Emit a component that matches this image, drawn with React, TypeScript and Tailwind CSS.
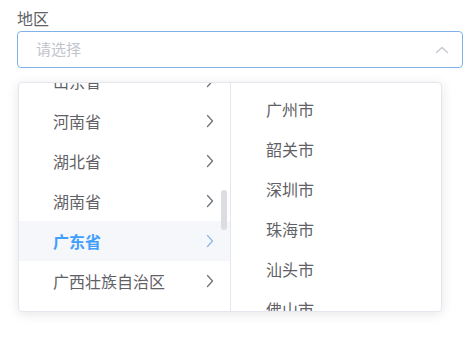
import React from "react";

const provinces = ["山东省", "河南省", "湖北省", "湖南省", "广东省", "广西壮族自治区", "海南省"];
const cities = ["广州市", "韶关市", "深圳市", "珠海市", "汕头市", "佛山市", "江门市"];

function ChevronRight({ color }: { color: string }) {
  return (
    <svg width="8" height="14" viewBox="0 0 8 14" fill="none">
      <polyline points="1.5,1.5 6.5,7 1.5,12.5" stroke={color} strokeWidth="1.3" strokeLinecap="round" strokeLinejoin="round" />
    </svg>
  );
}

export default function App() {
  return (
    <div
      className="w-[474px] h-[338px] bg-white pt-[8px] pl-[17px]"
      style={{ fontFamily: '"Noto Sans CJK SC", "Noto Sans", sans-serif' }}
    >
      <div className="text-[16px] leading-[20px] text-[#606266] mb-[3px]">地区</div>
      <div className="w-[446px] h-[37px] border border-[#7fb2e8] rounded-[4px] flex items-center justify-between pl-[18px] pr-[13px]">
        <span className="text-[15px] text-[#c0c4cc]">请选择</span>
        <svg width="14" height="10" viewBox="0 0 14 10" fill="none">
          <polyline points="1.5,7.5 7,2.5 12.5,7.5" stroke="#c0c4cc" strokeWidth="1.2" strokeLinecap="round" strokeLinejoin="round" />
        </svg>
      </div>
      <div className="mt-[14px] ml-[1px] w-[424px] h-[230px] border border-[#e4e7ed] rounded-[4px] bg-white shadow-[0_2px_12px_0_rgba(0,0,0,0.1)] flex overflow-hidden">
        <div className="relative w-[212px] h-full border-r border-[#e4e7ed] overflow-hidden">
          <div className="-mt-[22px]">
            {provinces.map((p) => {
              const active = p === "广东省";
              return (
                <div
                  key={p}
                  className={`h-[40px] flex items-center justify-between pl-[34px] pr-[16px] text-[16px] ${
                    active ? "bg-[#f5f7fa] text-[#409eff] font-bold" : "text-[#5f6166]"
                  }`}
                >
                  <span>{p}</span>
                  <ChevronRight color={active ? "#8fb9e8" : "#707378"} />
                </div>
              );
            })}
          </div>
          <div className="absolute right-[3px] top-[107px] w-[6px] h-[40px] rounded-[3px] bg-[#dcdde0]" />
        </div>
        <div className="flex-1 h-full overflow-hidden pt-[6px]">
          {cities.map((c) => (
            <div key={c} className="h-[40px] flex items-center pl-[35px] text-[16px] text-[#5f6166]">
              {c}
            </div>
          ))}
        </div>
      </div>
    </div>
  );
}
